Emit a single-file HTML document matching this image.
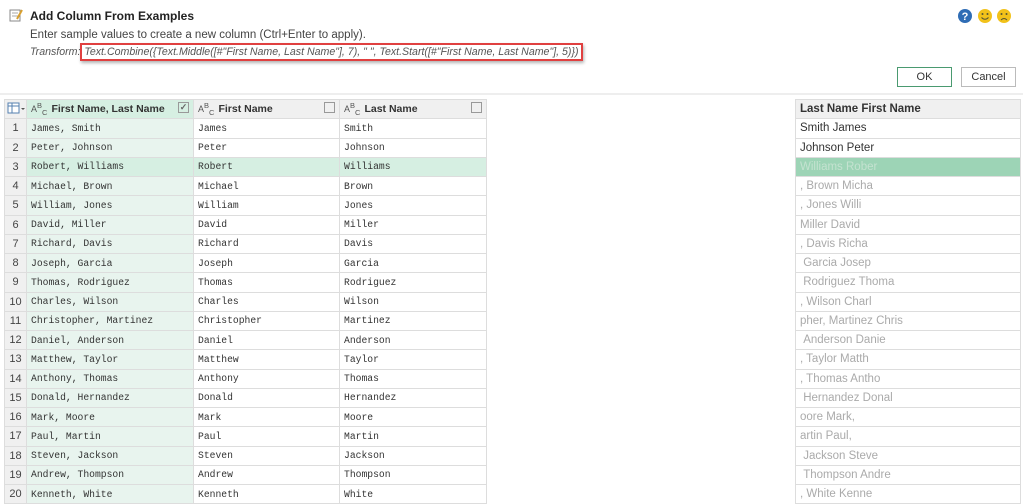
<!DOCTYPE html>
<html><head><meta charset="utf-8"><style>
*{margin:0;padding:0;box-sizing:border-box}
body{width:1023px;height:504px;overflow:hidden;background:#fff;font-family:"Liberation Sans",sans-serif;color:#333;position:relative}
.abs{position:absolute}
.title{left:30px;top:9px;font-size:12px;font-weight:bold;color:#222}
.sub{left:30px;top:29px;font-size:11.5px;color:#444}
.tr{left:30px;top:46px;font-size:10.6px;color:#555;font-style:italic;white-space:nowrap}
.box{border:2px solid #e04040;padding:1px 2px;box-shadow:1px 2px 3px rgba(0,0,0,.3)}
.btn{top:67px;height:20px;border:1px solid #bbb;font-size:11px;text-align:center;line-height:18px;color:#333}
table{border-collapse:collapse;position:absolute;table-layout:fixed}
td,th{border:1px solid #ddd;height:19.25px;padding:0 4px;white-space:nowrap;overflow:hidden;vertical-align:middle}
th{font-size:10.5px;text-align:left;font-weight:bold;background:#f0f0f0;color:#333}
td{font-family:"Liberation Mono",monospace;font-size:9.7px;color:#333}
td.n{font-family:"Liberation Sans";font-size:11px;text-align:center;background:#f0f0f0;color:#444;padding:0}
td.c1{background:#e8f4ee}
tr.sel td{background:#d6efe2}
tr.sel td.n{background:#f0f0f0}
.r td{font-family:"Liberation Sans";font-size:11.5px;color:#aaa}
.abc{font-size:9px;font-weight:normal;color:#555;margin-right:4px}
.chk{float:right;width:11px;height:11px;border:1px solid #999;margin-top:1px;font-size:9px;line-height:9px;text-align:center;color:#666}
</style></head><body>
<svg class="abs" style="left:9px;top:8px" width="14" height="14"><rect x="1" y="2" width="10" height="11" fill="#fff" stroke="#888"/><line x1="3" y1="5" x2="9" y2="5" stroke="#aaa"/><line x1="3" y1="8" x2="9" y2="8" stroke="#aaa"/><path d="M8 11 L13 2" stroke="#d8a030" stroke-width="2"/></svg>
<div class="abs title">Add Column From Examples</div>
<div class="abs sub">Enter sample values to create a new column (Ctrl+Enter to apply).</div>
<div class="abs tr">Transform: <span class="box" style="position:relative;left:-3px;top:0px">Text.Combine({Text.Middle([#"First Name, Last Name"], 7), " ", Text.Start([#"First Name, Last Name"], 5)})</span></div>
<svg class="abs" style="left:957px;top:8px" width="60" height="16"><circle cx="8" cy="8" r="7" fill="#2f6db5"/><text x="8" y="12" font-size="11" font-weight="bold" fill="#fff" text-anchor="middle" font-family="Liberation Sans">?</text><circle cx="28" cy="8" r="7" fill="#f2c21a"/><circle cx="25.5" cy="6" r="1" fill="#553"/><circle cx="30.5" cy="6" r="1" fill="#553"/><path d="M24.5 9.5 Q28 13 31.5 9.5" stroke="#553" fill="none"/><circle cx="47" cy="8" r="7" fill="#f2c21a"/><circle cx="44.5" cy="6" r="1" fill="#553"/><circle cx="49.5" cy="6" r="1" fill="#553"/><path d="M44 12 Q47 9 50 12" stroke="#553" fill="none"/></svg>
<div class="abs btn" style="left:897px;width:55px;border-color:#4a9a70">OK</div>
<div class="abs btn" style="left:961px;width:55px">Cancel</div>
<div class="abs" style="left:0;top:93px;width:1023px;height:2px;background:#eee"></div>
<table style="left:4px;top:99px;width:482px">
<colgroup><col style="width:22px"><col style="width:167px"><col style="width:146px"><col style="width:147px"></colgroup>
<tr><th style="padding:0 2px"><svg width="18" height="12"><rect x="1" y="1" width="11" height="10" fill="#fff" stroke="#5580b0"/><line x1="1" y1="4" x2="12" y2="4" stroke="#5580b0"/><line x1="5" y1="1" x2="5" y2="11" stroke="#5580b0"/><path d="M14 6 l2 2 l2-2z" fill="#555"/></svg></th>
<th style="background:#d6efe2"><span class="abc">A<sup>B</sup><sub>C</sub></span>First Name, Last Name<span class="chk">✓</span></th>
<th><span class="abc">A<sup>B</sup><sub>C</sub></span>First Name<span class="chk"></span></th>
<th><span class="abc">A<sup>B</sup><sub>C</sub></span>Last Name<span class="chk"></span></th></tr>
<tr><td class="n">1</td><td class="c1">James, Smith</td><td>James</td><td>Smith</td></tr>
<tr><td class="n">2</td><td class="c1">Peter, Johnson</td><td>Peter</td><td>Johnson</td></tr>
<tr class="sel"><td class="n">3</td><td class="c1">Robert, Williams</td><td>Robert</td><td>Williams</td></tr>
<tr><td class="n">4</td><td class="c1">Michael, Brown</td><td>Michael</td><td>Brown</td></tr>
<tr><td class="n">5</td><td class="c1">William, Jones</td><td>William</td><td>Jones</td></tr>
<tr><td class="n">6</td><td class="c1">David, Miller</td><td>David</td><td>Miller</td></tr>
<tr><td class="n">7</td><td class="c1">Richard, Davis</td><td>Richard</td><td>Davis</td></tr>
<tr><td class="n">8</td><td class="c1">Joseph, Garcia</td><td>Joseph</td><td>Garcia</td></tr>
<tr><td class="n">9</td><td class="c1">Thomas, Rodriguez</td><td>Thomas</td><td>Rodriguez</td></tr>
<tr><td class="n">10</td><td class="c1">Charles, Wilson</td><td>Charles</td><td>Wilson</td></tr>
<tr><td class="n">11</td><td class="c1">Christopher, Martinez</td><td>Christopher</td><td>Martinez</td></tr>
<tr><td class="n">12</td><td class="c1">Daniel, Anderson</td><td>Daniel</td><td>Anderson</td></tr>
<tr><td class="n">13</td><td class="c1">Matthew, Taylor</td><td>Matthew</td><td>Taylor</td></tr>
<tr><td class="n">14</td><td class="c1">Anthony, Thomas</td><td>Anthony</td><td>Thomas</td></tr>
<tr><td class="n">15</td><td class="c1">Donald, Hernandez</td><td>Donald</td><td>Hernandez</td></tr>
<tr><td class="n">16</td><td class="c1">Mark, Moore</td><td>Mark</td><td>Moore</td></tr>
<tr><td class="n">17</td><td class="c1">Paul, Martin</td><td>Paul</td><td>Martin</td></tr>
<tr><td class="n">18</td><td class="c1">Steven, Jackson</td><td>Steven</td><td>Jackson</td></tr>
<tr><td class="n">19</td><td class="c1">Andrew, Thompson</td><td>Andrew</td><td>Thompson</td></tr>
<tr><td class="n">20</td><td class="c1">Kenneth, White</td><td>Kenneth</td><td>White</td></tr>
</table>
<table class="r" style="left:795px;top:99px;width:226px">
<tr><th style="font-size:11.5px">Last Name First Name</th></tr>
<tr><td style="color:#333">Smith James</td></tr>
<tr><td style="color:#333">Johnson Peter</td></tr>
<tr><td style="background:#9dd4b6;color:#c4e2d0">Williams Rober</td></tr>
<tr><td>, Brown Micha</td></tr>
<tr><td>, Jones Willi</td></tr>
<tr><td>Miller David</td></tr>
<tr><td>, Davis Richa</td></tr>
<tr><td>&nbsp;Garcia Josep</td></tr>
<tr><td>&nbsp;Rodriguez Thoma</td></tr>
<tr><td>, Wilson Charl</td></tr>
<tr><td>pher, Martinez Chris</td></tr>
<tr><td>&nbsp;Anderson Danie</td></tr>
<tr><td>, Taylor Matth</td></tr>
<tr><td>, Thomas Antho</td></tr>
<tr><td>&nbsp;Hernandez Donal</td></tr>
<tr><td>oore Mark,</td></tr>
<tr><td>artin Paul,</td></tr>
<tr><td>&nbsp;Jackson Steve</td></tr>
<tr><td>&nbsp;Thompson Andre</td></tr>
<tr><td>, White Kenne</td></tr>
</table>
</body></html>
